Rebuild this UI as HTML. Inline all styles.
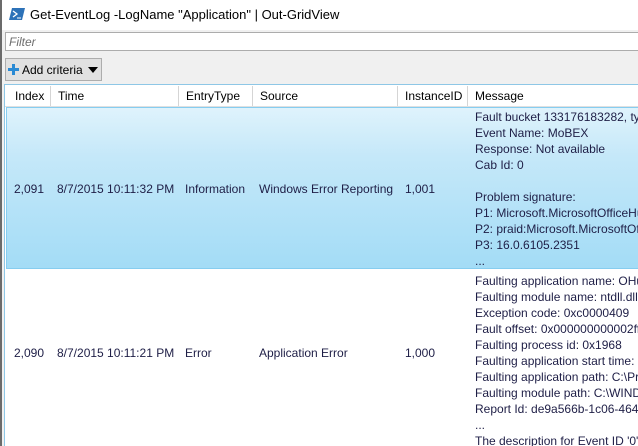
<!DOCTYPE html>
<html style="width:638px;height:446px;overflow:hidden"><head><style>
*{margin:0;padding:0;box-sizing:border-box}
body{width:638px;height:446px;overflow:hidden;background:#f0f0f0;font-family:"Liberation Sans",sans-serif;font-size:12px;color:#1e1e46;position:relative}
.abs{position:absolute;white-space:nowrap}
#title{left:0;top:0;width:638px;height:30px;background:#fff}
#title span{position:absolute;left:30px;top:7px;font-size:13px;color:#000}
#filter{left:5px;top:32px;width:633px;height:19px;background:#fff;border:1px solid #acacac;border-right:none}
#filter span{position:absolute;left:3px;top:2px;font-style:italic;color:#6d6d6d}
#btn{left:5px;top:58px;width:97px;height:23px;background:#e1e1e1;border:1px solid #adadad}
#grid{left:4px;top:84px;width:634px;height:362px;background:#fff;border:1px solid #8ec7e6;border-right:none;border-bottom:none}
#hdr{left:5px;top:85px;width:633px;height:22px;background:#fff;border-bottom:1px solid #e0e0e0}
.h{position:absolute;top:89px;color:#000}
.sep{position:absolute;top:86px;width:1px;height:20px;background:#d5d5d5}
#sel{left:6px;top:107px;width:632px;height:162px;background:linear-gradient(#dff3fc,#c5e8f9 30%,#a3dcf6);border:1px solid #86cdf0;border-right:none}
.msg{position:absolute;left:475px;line-height:16px;white-space:pre}
</style></head><body>
<div class="abs" style="left:0;top:0;width:2px;height:446px;background:#6b6b6b;z-index:5"></div>
<div class="abs" id="title">
<svg style="position:absolute;left:9px;top:7px" width="16" height="14"><polygon points="3,1 16,1 13,13 0,13" fill="#2d72b8"/><polyline points="4,4 8,7 4,10" stroke="#fff" stroke-width="1.3" fill="none"/><line x1="8" y1="11" x2="12" y2="11" stroke="#fff"/></svg>
<span>Get-EventLog -LogName "Application" | Out-GridView</span></div>
<div class="abs" id="filter"><span>Filter</span></div>
<div class="abs" id="btn">
<svg style="position:absolute;left:2px;top:5px" width="11" height="11"><rect x="4" y="0" width="3" height="11" fill="#2a8ad4"/><rect x="0" y="4" width="11" height="3" fill="#2a8ad4"/></svg>
<span style="position:absolute;left:16px;top:4px;color:#000">Add criteria</span>
<svg style="position:absolute;left:82px;top:8px" width="10" height="6"><polygon points="0,0 10,0 5,6" fill="#000"/></svg></div>
<div class="abs" id="grid"></div>
<div class="abs" id="hdr"></div>
<span class="h" style="left:15px">Index</span><div class="sep" style="left:50px"></div>
<span class="h" style="left:58px">Time</span><div class="sep" style="left:178px"></div>
<span class="h" style="left:186px">EntryType</span><div class="sep" style="left:252px"></div>
<span class="h" style="left:260px">Source</span><div class="sep" style="left:397px"></div>
<span class="h" style="left:405px">InstanceID</span><div class="sep" style="left:467px"></div>
<span class="h" style="left:475px">Message</span>
<div class="abs" id="sel"></div>
<span class="abs" style="left:14px;top:182px">2,091</span>
<span class="abs" style="left:57px;top:182px">8/7/2015 10:11:32 PM</span>
<span class="abs" style="left:185px;top:182px">Information</span>
<span class="abs" style="left:259px;top:182px">Windows Error Reporting</span>
<span class="abs" style="left:405px;top:182px">1,001</span>
<div class="msg" style="top:109px">Fault bucket 133176183282, type
Event Name: MoBEX
Response: Not available
Cab Id: 0

Problem signature:
P1: Microsoft.MicrosoftOfficeHub
P2: praid:Microsoft.MicrosoftOffice
P3: 16.0.6105.2351
...</div>
<span class="abs" style="left:14px;top:346px">2,090</span>
<span class="abs" style="left:57px;top:346px">8/7/2015 10:11:21 PM</span>
<span class="abs" style="left:185px;top:346px">Error</span>
<span class="abs" style="left:259px;top:346px">Application Error</span>
<span class="abs" style="left:405px;top:346px">1,000</span>
<div class="msg" style="top:273px;height:173px;overflow:hidden">Faulting application name: OHub
Faulting module name: ntdll.dll, v
Exception code: 0xc0000409
Fault offset: 0x000000000002ff9
Faulting process id: 0x1968
Faulting application start time: 0
Faulting application path: C:\Pro
Faulting module path: C:\WINDO
Report Id: de9a566b-1c06-464f
...
The description for Event ID '0'</div>
</body></html>
